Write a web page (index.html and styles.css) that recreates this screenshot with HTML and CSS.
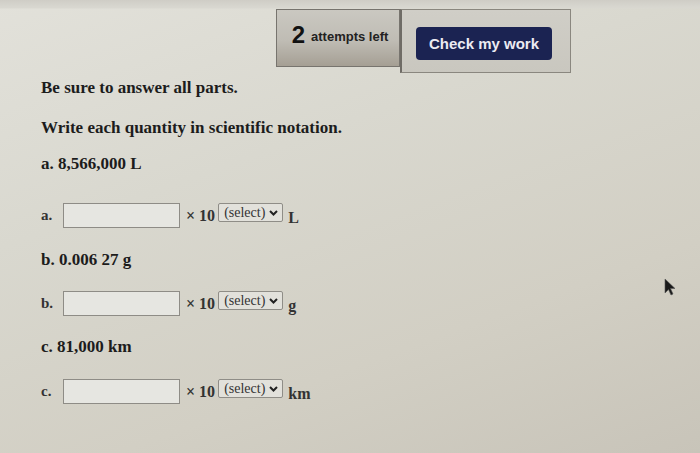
FILE: index.html
```html
<!DOCTYPE html>
<html>
<head>
<meta charset="utf-8">
<link rel="stylesheet" href="styles.css">
</head>
<body>
<div class="page">
  <div class="header">
    <div class="attempts"><span class="num">2</span><span class="alabel">attempts left</span></div>
    <div class="checkbox"><button class="check">Check my work</button></div>
  </div>
  <div class="content">
    <p class="line l1">Be sure to answer all parts.</p>
    <p class="line l2">Write each quantity in scientific notation.</p>
    <p class="line q qa">a. 8,566,000 L</p>
    <div class="row ra">
      <span class="lbl">a.</span><span class="inp"></span><span class="times">× 10</span><span class="sel">(select)<svg class="chev" viewBox="0 0 10 8" width="11" height="8"><path d="M1.5 2 L5 5.5 L8.5 2" fill="none" stroke="#222" stroke-width="2"/></svg></span><span class="unit">L</span>
    </div>
    <p class="line q qb">b. 0.006 27 g</p>
    <div class="row rb">
      <span class="lbl">b.</span><span class="inp"></span><span class="times">× 10</span><span class="sel">(select)<svg class="chev" viewBox="0 0 10 8" width="11" height="8"><path d="M1.5 2 L5 5.5 L8.5 2" fill="none" stroke="#222" stroke-width="2"/></svg></span><span class="unit">g</span>
    </div>
    <p class="line q qc">c. 81,000 km</p>
    <div class="row rc">
      <span class="lbl">c.</span><span class="inp"></span><span class="times">× 10</span><span class="sel">(select)<svg class="chev" viewBox="0 0 10 8" width="11" height="8"><path d="M1.5 2 L5 5.5 L8.5 2" fill="none" stroke="#222" stroke-width="2"/></svg></span><span class="unit">km</span>
    </div>
  </div>
  <svg class="cursor" viewBox="0 0 14 20" width="14" height="20"><path d="M1 1 L1 15 L4.5 11.5 L7 17 L9 16 L6.5 10.5 L11 10.5 Z" fill="#1a1a1a" stroke="#555" stroke-width="0.6"/></svg>
</div>
</body>
</html>
```
FILE: styles.css
```css
html, body {
  margin: 0;
  padding: 0;
}
body {
  width: 700px;
  height: 453px;
  overflow: hidden;
  background: linear-gradient(160deg, #e2e1da 0%, #d9d8cf 35%, #d2cfc4 70%, #c8c4b9 100%);
  font-family: "Liberation Serif", "Times New Roman", serif;
  color: #1c1c1c;
}
.page {
  position: relative;
  width: 700px;
  height: 453px;
}
.header {
  display: flex;
  align-items: flex-start;
  padding-left: 276px;
  padding-top: 9px;
  height: 66px;
  box-sizing: border-box;
  background: linear-gradient(180deg, #cfcdc6 0px, #d9d8d1 8px, transparent 9px);
}
.attempts {
  width: 124px;
  height: 58px;
  box-sizing: border-box;
  border: 1px solid #77746e;
  background: linear-gradient(180deg, #cac8c1 0%, #bfbcb4 55%, #a59f94 100%);
  display: flex;
  align-items: center;
  justify-content: center;
  gap: 6px;
  font-family: "Liberation Sans", Arial, sans-serif;
  padding-bottom: 6px;
  padding-left: 4px;
}
.num {
  font-size: 24px;
  font-weight: bold;
  color: #111;
}
.alabel {
  font-size: 13px;
  font-weight: bold;
  color: #222;
  margin-top: 3px;
}
.checkbox {
  width: 171px;
  height: 64px;
  box-sizing: border-box;
  border: 1px solid #8a877f;
  border-left: 2px solid #6f6c66;
  background: linear-gradient(180deg, #d0cec7 0%, #c9c7bf 100%);
  display: flex;
  align-items: flex-start;
  justify-content: center;
  padding-top: 17px;
  padding-right: 4px;
}
.check {
  width: 136px;
  height: 33px;
  border: none;
  border-radius: 4px;
  background: #1b2352;
  color: #ecebf2;
  font-family: "Liberation Sans", Arial, sans-serif;
  font-size: 15px;
  font-weight: bold;
  padding: 0;
}
.content {
  padding-left: 41px;
  display: flex;
  flex-direction: column;
  align-items: flex-start;
}
.line {
  margin: 0;
  font-weight: bold;
  font-size: 17px;
  line-height: 20px;
}
.l1 { margin-top: 12px; }
.l2 { margin-top: 20px; }
.qa { margin-top: 16px; }
.qb { margin-top: 21px; }
.qc { margin-top: 20px; }
.row {
  display: flex;
  align-items: flex-start;
  height: 26px;
}
.ra { margin-top: 29px; }
.rb { margin-top: 21px; }
.rc { margin-top: 22px; }
.lbl {
  font-weight: bold;
  font-size: 15px;
  width: 22px;
  line-height: 24px;
  color: #333;
}
.inp {
  width: 117px;
  height: 25px;
  box-sizing: border-box;
  border: 1px solid #8e8c86;
  background: #e6e6e1;
}
.times {
  font-size: 16px;
  font-weight: bold;
  margin-left: 6px;
  line-height: 26px;
  color: #333;
}
.sel {
  display: inline-flex;
  align-items: center;
  gap: 3px;
  height: 19px;
  box-sizing: border-box;
  border: 1px solid #8f8d87;
  border-radius: 2px;
  background: #e2e1db;
  padding: 0 3px 0 5px;
  font-size: 14px;
  color: #333;
  margin-left: 3px;
  margin-top: 0;
}
.chev { display: block; }
.unit {
  font-size: 16px;
  font-weight: bold;
  margin-left: 5px;
  line-height: 30px;
  color: #333;
}
.cursor {
  position: absolute;
  left: 664px;
  top: 278px;
}
```
